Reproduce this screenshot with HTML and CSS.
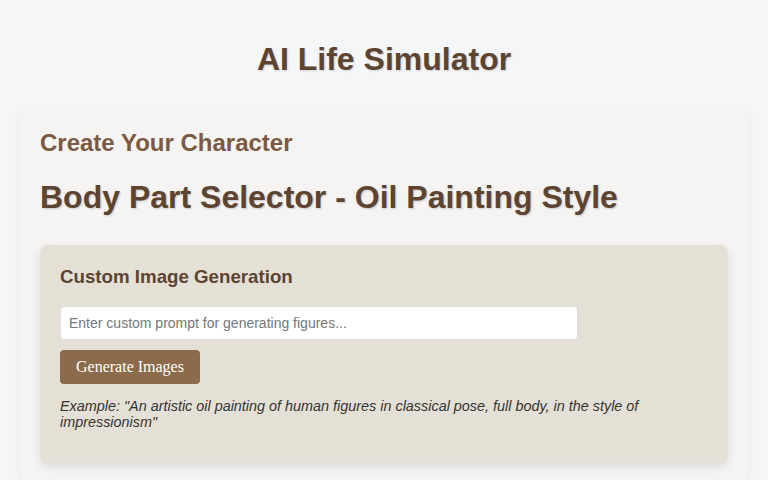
FILE: index.html
```html
<!DOCTYPE html>
<html>
<head>
<meta charset="utf-8">
<link rel="stylesheet" href="styles.css">
</head>
<body>
<div class="app">
  <h1 class="app-title">AI Life Simulator</h1>
  <div class="card">
    <h2 class="section-title">Create Your Character</h2>
    <h1 class="page-title">Body Part Selector - Oil Painting Style</h1>
    <div class="panel">
      <h3 class="panel-title">Custom Image Generation</h3>
      <input class="prompt" type="text" placeholder="Enter custom prompt for generating figures...">
      <button class="gen-btn">Generate Images</button>
      <p class="example">Example: "An artistic oil painting of human figures in classical pose, full body, in the style of impressionism"</p>
    </div>
  </div>
</div>
</body>
</html>
```
FILE: styles.css
```css
html, body {
  margin: 0;
  padding: 0;
  background: #f5f6f8;
  font-family: "Liberation Sans", Arial, sans-serif;
}
.app {
  padding: 20px;
}
.app-title {
  margin: 21px 0 31px;
  text-align: center;
  font-size: 32px;
  line-height: 37px;
  color: #5c4431;
  text-shadow: 1px 1px 2px rgba(0,0,0,0.15);
}
.card {
  background: #f5f4f2;
  border-radius: 10px;
  box-shadow: 0 2px 10px rgba(0,0,0,0.06);
  padding: 20px;
}
.section-title {
  margin: 0;
  font-size: 24px;
  line-height: 28px;
  color: #7a5a42;
}
.page-title {
  margin: 22px 0 29px;
  font-size: 32px;
  line-height: 37px;
  color: #5c4431;
  text-shadow: 1px 1px 2px rgba(0,0,0,0.18);
}
.panel {
  background: #e5e0d5;
  border-radius: 8px;
  box-shadow: 0 4px 10px rgba(0,0,0,0.1);
  padding: 21px 20px 33px;
}
.panel-title {
  margin: 0 0 18px;
  font-size: 18.72px;
  line-height: 22px;
  color: #5c4431;
}
.prompt {
  display: block;
  box-sizing: border-box;
  width: 518px;
  height: 34px;
  padding: 0 8px;
  border: 1px solid #ddd;
  border-radius: 4px;
  background: #fff;
  font-family: "Liberation Sans", Arial, sans-serif;
  font-size: 14px;
  color: #333;
  margin: 0 0 10px;
}
.prompt::placeholder {
  color: #777;
}
.gen-btn {
  display: block;
  height: 34px;
  padding: 0 16px;
  border: none;
  border-radius: 4px;
  background: #8b6b4a;
  color: #fff;
  font-family: "Liberation Serif", "Times New Roman", serif;
  font-size: 16px;
}
.example {
  margin: 14px 0 0;
  font-size: 14.4px;
  line-height: 16px;
  font-style: italic;
  color: #333;
}
```
